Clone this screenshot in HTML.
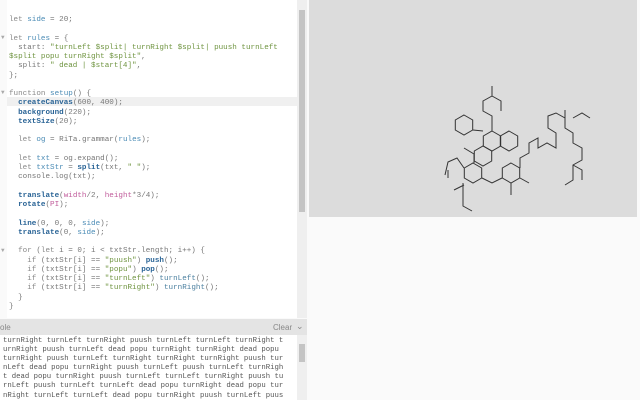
<!DOCTYPE html>
<html><head><style>
body{margin:0;width:640px;height:400px;overflow:hidden;background:#fafafa;position:relative;font-family:"Liberation Mono","DejaVu Sans Mono",monospace}
#ed{position:absolute;left:0;top:0;width:297px;height:318px;background:#fff;overflow:hidden}
#gut{position:absolute;left:0;top:0;width:7px;height:318px;background:#fafafa}
pre{margin:0;font-family:inherit}
#code{position:absolute;left:9px;top:16px;font-size:7.6px;line-height:9.25px;color:#777;white-space:pre}
.hl{position:absolute;left:7px;top:97px;width:290px;height:9px;background:#f0f0f0}
.k{color:#888}.v{color:#4a8bb5}.s{color:#6f9440}.f{color:#2a6496;font-weight:bold}.p{color:#c05a9a}.c{color:#4a7f9f}
#sb{position:absolute;left:297px;top:0;width:10px;height:318px;background:#efefef}
#th{position:absolute;left:299px;top:10px;width:6px;height:202px;background:#c4c4c4}
#cv{position:absolute;left:309px;top:0;width:328px;height:217px;background:#dcdcdc}
#ch{position:absolute;left:0;top:319px;width:307px;height:16px;background:#e4e4e4;font-family:"Liberation Sans",sans-serif;font-size:8px;color:#888}
#con{position:absolute;left:0;top:335px;width:297px;height:65px;background:#fff;overflow:hidden}
#ct{position:absolute;left:3px;top:2px;font-size:7.3px;line-height:9.1px;color:#555;white-space:pre}
#sb2{position:absolute;left:297px;top:335px;width:10px;height:65px;background:#efefef}
#th2{position:absolute;left:299px;top:344px;width:6px;height:18px;background:#c4c4c4}
.tri{position:absolute;left:1px;font-size:6px;color:#aaa}
</style></head><body>
<div id="ed"><div id="gut"></div><div class="hl"></div>
<span class="tri" style="top:34px">▼</span><span class="tri" style="top:89px">▼</span><span class="tri" style="top:247px">▼</span>
<pre id="code"><span class="k">let</span> <span class="v">side</span> = 20;

<span class="k">let</span> <span class="v">rules</span> = {
  start: <span class="s">"turnLeft $split| turnRight $split| puush turnLeft</span>
<span class="s">$split popu turnRight $split"</span>,
  split: <span class="s">" dead | $start[4]"</span>,
};

<span class="k">function</span> <span class="v">setup</span>() {
  <span class="f">createCanvas</span>(600, 400);
  <span class="f">background</span>(220);
  <span class="f">textSize</span>(20);

  <span class="k">let</span> <span class="v">og</span> = RiTa.grammar(<span class="v">rules</span>);

  <span class="k">let</span> <span class="v">txt</span> = og.expand();
  <span class="k">let</span> <span class="v">txtStr</span> = <span class="f">split</span>(txt, <span class="s">" "</span>);
  console.log(txt);

  <span class="f">translate</span>(<span class="p">width</span>/2, <span class="p">height</span>*3/4);
  <span class="f">rotate</span>(<span class="p">PI</span>);

  <span class="f">line</span>(0, 0, 0, <span class="v">side</span>);
  <span class="f">translate</span>(0, <span class="v">side</span>);

  <span class="k">for</span> (<span class="k">let</span> i = 0; i &lt; txtStr.length; i++) {
    <span class="k">if</span> (txtStr[i] == <span class="s">"puush"</span>) <span class="f">push</span>();
    <span class="k">if</span> (txtStr[i] == <span class="s">"popu"</span>) <span class="f">pop</span>();
    <span class="k">if</span> (txtStr[i] == <span class="s">"turnLeft"</span>) <span class="c">turnLeft</span>();
    <span class="k">if</span> (txtStr[i] == <span class="s">"turnRight"</span>) <span class="c">turnRight</span>();
  }
}</pre></div>
<div id="sb"></div><div id="th"></div>
<div id="cv">
<svg width="328" height="217" viewBox="309 0 328 217" style="position:absolute;left:0;top:0" fill="none" stroke="#333" stroke-width="1">
<defs><path id="h" d="M0,-10 L8.7,-5 L8.7,5 L0,10 L-8.7,5 L-8.7,-5 Z"/></defs>
<use href="#h" x="464" y="125"/>
<use href="#h" x="492" y="141"/>
<use href="#h" x="509" y="141"/>
<use href="#h" x="483" y="156"/>
<use href="#h" x="473" y="173"/>
<use href="#h" x="511" y="173"/>
<path d="M492,86 L492,96 L483,101 L483,111 L492,116 L492,131 M492,96 L501,101 L501,111"/>
<path d="M473,130 L483,131 M464,148 L474,154 L474,163 M448,170 L448,178 M445,175 L448,162 L457,158 L464,168 M463,183 L463,196 L463,206 L472,211 M454,190 L464,185 M482,178 L492,183 L502,178 M511,183 L511,195 M520,178 L529,183 M520,168 L520,158 L529,153 L529,143 L538,138 L538,148 L547,143 L556,148 L556,133 L548,128 L548,116 L556,113 L565,118 L565,128 L573,133 L573,143 L582,148 L582,160 L573,165 L573,180 L565,185 M573,118 L582,113 L590,118 M565,118 L565,110 M573,165 L582,170 L582,180"/>
</svg></div>
<div id="ch"><span style="position:absolute;left:0;top:4px">ole</span><span style="position:absolute;left:273px;top:4px">Clear</span><span style="position:absolute;left:296px;top:2px;font-size:9px">⌄</span></div>
<div id="con"><pre id="ct">turnRight turnLeft turnRight puush turnLeft turnLeft turnRight t
urnRight puush turnLeft dead popu turnRight turnRight dead popu
turnRight puush turnLeft turnRight turnRight turnRight puush tur
nLeft dead popu turnRight puush turnLeft puush turnLeft turnRigh
t dead popu turnRight puush turnLeft turnLeft turnRight puush tu
rnLeft puush turnLeft turnLeft dead popu turnRight dead popu tur
nRight turnLeft turnLeft dead popu turnRight puush turnLeft puus</pre></div>
<div id="sb2"></div><div id="th2"></div>
</body></html>
